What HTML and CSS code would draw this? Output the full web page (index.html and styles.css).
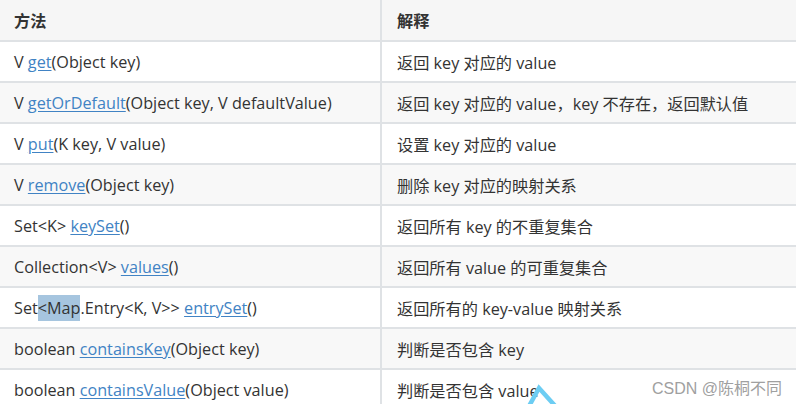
FILE: index.html
```html
<!DOCTYPE html>
<html lang="zh">
<head>
<meta charset="utf-8">
<link rel="stylesheet" href="styles.css">
</head>
<body>
<div class="page">
  <table class="api">
    <colgroup><col class="c1"><col class="c2"></colgroup>
    <thead>
      <tr><th>方法</th><th>解释</th></tr>
    </thead>
    <tbody>
      <tr><td>V <a>get</a>(Object key)</td><td>返回 key 对应的 value</td></tr>
      <tr><td>V <a>getOrDefault</a>(Object key, V defaultValue)</td><td>返回 key 对应的 value，key 不存在，返回默认值</td></tr>
      <tr><td>V <a>put</a>(K key, V value)</td><td>设置 key 对应的 value</td></tr>
      <tr><td>V <a>remove</a>(Object key)</td><td>删除 key 对应的映射关系</td></tr>
      <tr><td>Set&lt;K&gt; <a>keySet</a>()</td><td>返回所有 key 的不重复集合</td></tr>
      <tr><td>Collection&lt;V&gt; <a>values</a>()</td><td>返回所有 value 的可重复集合</td></tr>
      <tr><td>Set<span class="sel">&lt;Map</span>.Entry&lt;K, V&gt;&gt; <a>entrySet</a>()</td><td>返回所有的 key-value 映射关系</td></tr>
      <tr><td>boolean <a>containsKey</a>(Object key)</td><td>判断是否包含 key</td></tr>
      <tr><td>boolean <a>containsValue</a>(Object value)</td><td>判断是否包含 value</td></tr>
    </tbody>
  </table>
  <div class="watermark">CSDN @陈桐不同</div>
  <svg class="cursor" width="50" height="26" viewBox="0 0 50 26">
    <polyline points="14,28 25,8 43,28" fill="none" stroke="#6ccdf3" stroke-width="4.5" stroke-linejoin="miter"/>
  </svg>
</div>
</body>
</html>
```
FILE: styles.css
```css
html, body {
  margin: 0;
  padding: 0;
  background: #fff;
}
.page {
  position: relative;
  width: 796px;
  height: 404px;
  overflow: hidden;
}
.api {
  border-collapse: separate;
  border-spacing: 0;
  table-layout: fixed;
  width: 1000px;
  font-family: "Open Sans", "Noto Sans CJK SC", sans-serif;
  font-size: 16.2px;
  color: #333;
}
.c1 { width: 382px; }
.c2 { width: 618px; }
.api th, .api td {
  box-sizing: border-box;
  text-align: left;
  padding: 0 14px;
  border-bottom: 2px solid #dfe2e5;
  white-space: nowrap;
}
.api th:first-child, .api td:first-child {
  border-right: 2px solid #dfe2e5;
}
.api th:last-child, .api td:last-child {
  padding-left: 15px;
}
.api th {
  height: 42px;
  font-weight: bold;
  background: #f6f6f6;
  padding-bottom: 1px;
}
.api td {
  height: 41px;
}
.api tbody tr:nth-child(even) td {
  background: #f8f8f8;
}
.api a {
  color: #4183c4;
  text-decoration: underline;
  text-underline-offset: 2px;
}
.sel {
  background: #a6c5df;
  padding: 2px 0;
}
.watermark {
  position: absolute;
  left: 652px;
  top: 375px;
  font-family: "Liberation Sans", "Noto Sans CJK SC", sans-serif;
  font-size: 16px;
  color: #a0a0a0;
  white-space: nowrap;
}
.cursor {
  position: absolute;
  left: 514px;
  top: 380px;
}
```
